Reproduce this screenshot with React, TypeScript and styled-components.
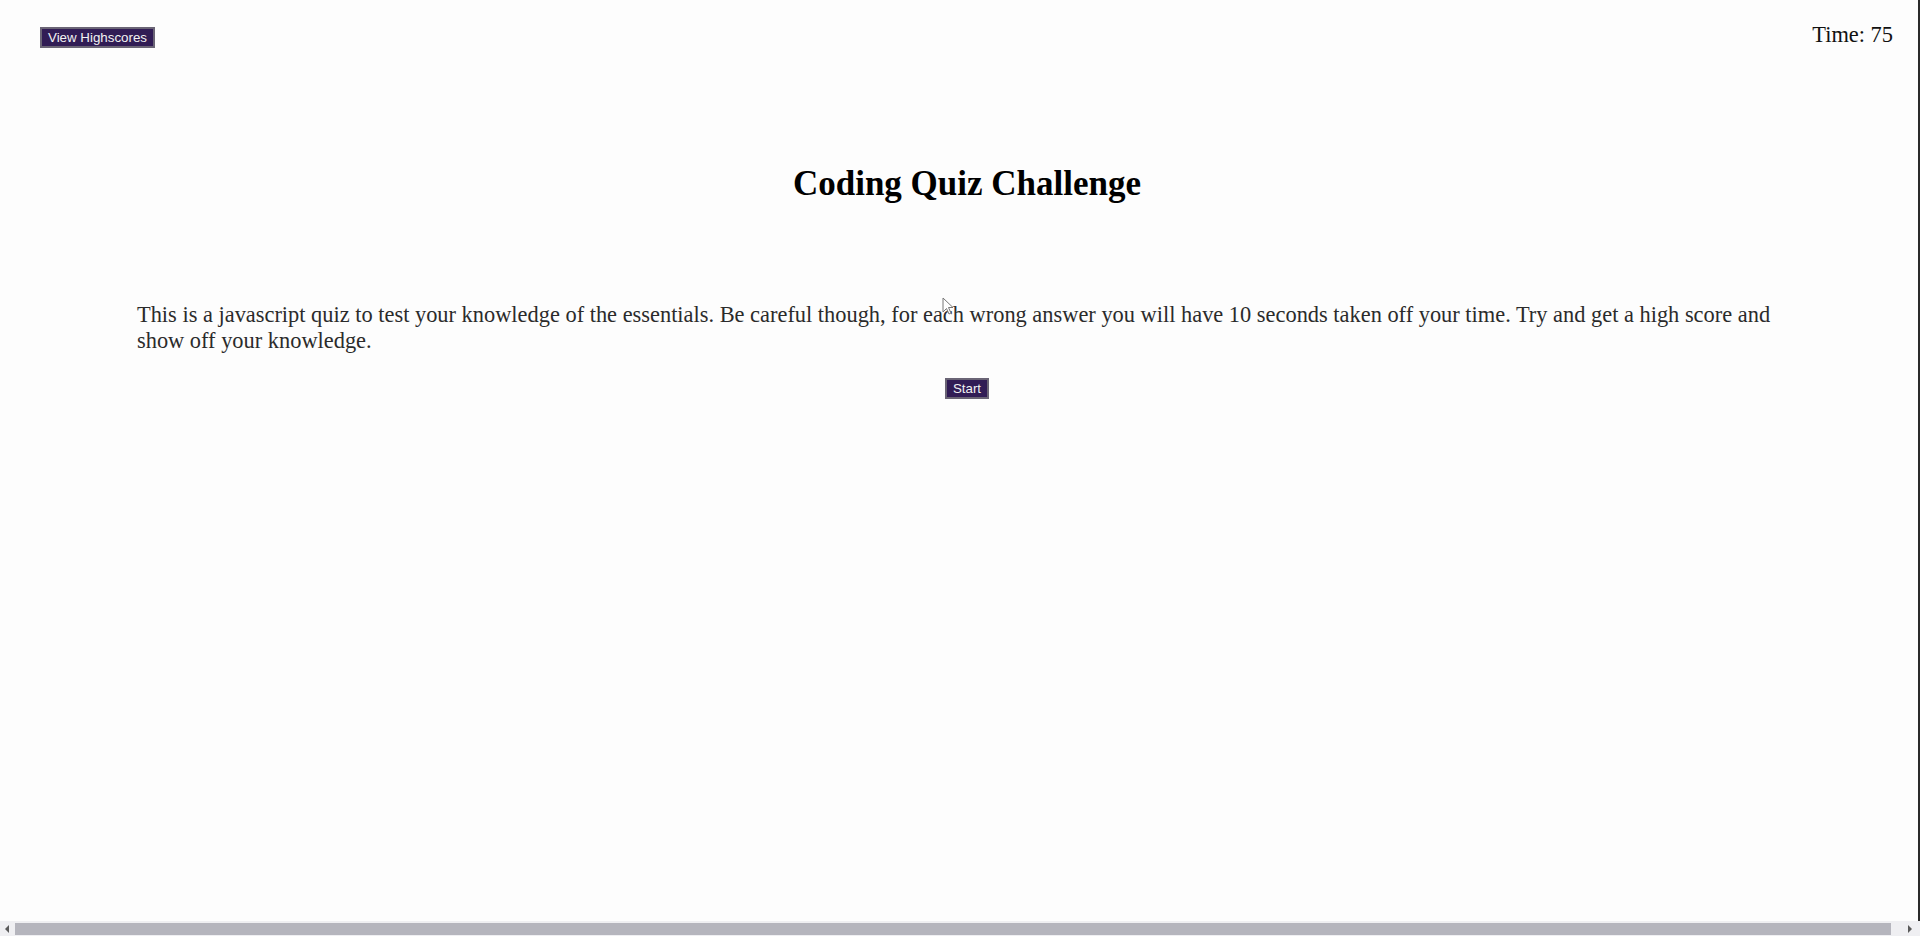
import React from "react";
import styled, { createGlobalStyle } from "styled-components";

const GlobalStyle = createGlobalStyle`
  html, body {
    margin: 0;
    padding: 0;
    background: #fdfdfd;
    overflow: hidden;
  }
  body {
    font-family: "Liberation Serif", "Times New Roman", serif;
  }
`;

const Frame = styled.div`
  position: relative;
  box-sizing: border-box;
  width: 1920px;
  height: 936px;
  border-right: 2px solid #2a2a2a;
  background: #fdfdfd;
`;

const Header = styled.header`
  display: flex;
  justify-content: space-between;
  align-items: flex-start;
  padding: 22px 25px 0 40px;
`;

const PurpleButton = styled.button<{ $offset?: number }>`
  margin-top: ${(p) => p.$offset ?? 0}px;
  padding: 1px 6px;
  border: 2px solid #6a6475;
  background: #311c55;
  color: #f2f2f2;
  font-family: "Liberation Sans", Arial, sans-serif;
  font-size: 13.33px;
  line-height: 15px;
  cursor: pointer;
`;

const Timer = styled.div`
  font-size: 22.4px;
  line-height: 25px;
  color: #111;
`;

const Main = styled.main`
  display: flex;
  flex-direction: column;
  align-items: center;
  padding: 0 121px 0 137px;
`;

const Title = styled.h1`
  margin: 116px 0 0;
  font-size: 35px;
  font-weight: bold;
  line-height: 40px;
  color: #000;
  text-align: center;
`;

const Intro = styled.p`
  align-self: stretch;
  margin: 98px 0 0;
  font-size: 22.4px;
  line-height: 26px;
  color: #2b2b2b;
`;

const Scrollbar = styled.div`
  position: absolute;
  left: 0;
  right: -2px;
  bottom: 0;
  height: 15px;
  display: flex;
  align-items: center;
  background: #efeff2;
`;

const Arrow = styled.span<{ $dir: "left" | "right" }>`
  width: 0;
  height: 0;
  margin: ${(p) => (p.$dir === "left" ? "0 6px 0 5px" : "0 8px 0 6px")};
  border-top: 4px solid transparent;
  border-bottom: 4px solid transparent;
  ${(p) =>
    p.$dir === "left"
      ? "border-right: 4px solid #5a5a5a;"
      : "border-left: 4px solid #5a5a5a;"}
`;

const Thumb = styled.div`
  flex: 1;
  height: 12px;
  margin-right: 11px;
  background: #b5b5bd;
`;

const Cursor = styled.svg`
  position: absolute;
  left: 942px;
  top: 297px;
`;

export default function App() {
  return (
    <>
      <GlobalStyle />
      <Frame>
        <Header>
          <PurpleButton $offset={5}>View Highscores</PurpleButton>
          <Timer>Time: 75</Timer>
        </Header>
        <Main>
          <Title>Coding Quiz Challenge</Title>
          <Intro>
            This is a javascript quiz to test your knowledge of the essentials. Be careful though, for each wrong
            answer you will have 10 seconds taken off your time. Try and get a high score and show off your
            knowledge.
          </Intro>
          <PurpleButton $offset={24}>Start</PurpleButton>
        </Main>
        <Cursor width="12" height="19" viewBox="0 0 12 19">
          <path d="M1 1 L1 15 L4.5 11.5 L7 17 L9 16 L6.5 10.5 L11 10.5 Z" fill="#fdfdfd" stroke="#777" strokeWidth="1" />
        </Cursor>
        <Scrollbar>
          <Arrow $dir="left" />
          <Thumb />
          <Arrow $dir="right" />
        </Scrollbar>
      </Frame>
    </>
  );
}
